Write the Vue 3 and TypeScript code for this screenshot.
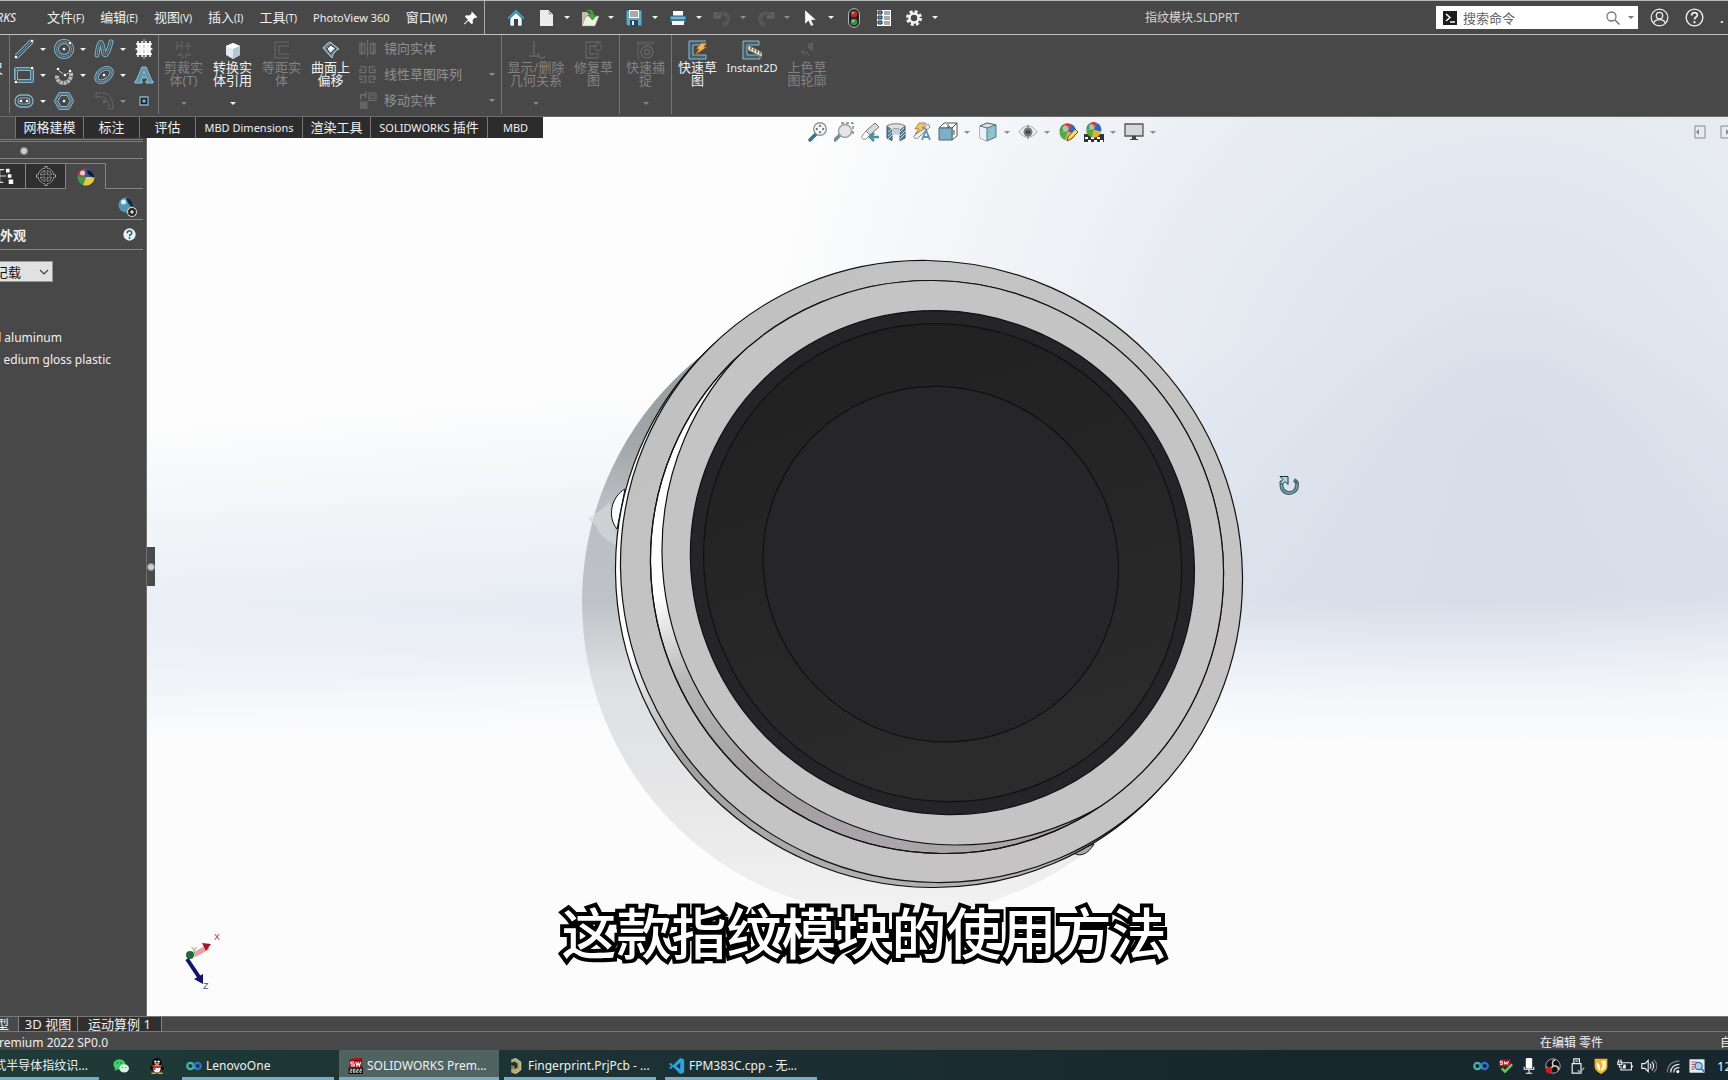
<script setup lang="ts">
interface Tool { icon: string; label: string; drop?: boolean; off?: boolean }
interface Command { icon: string; lines: string[]; width: number; drop?: boolean; off?: boolean }
interface Task { icon: string; label: string; active?: boolean }

const menus = [
  { label: '文件', key: '(F)' },
  { label: '编辑', key: '(E)' },
  { label: '视图', key: '(V)' },
  { label: '插入', key: '(I)' },
  { label: '工具', key: '(T)' },
  { label: 'PhotoView 360', key: '' },
  { label: '窗口', key: '(W)' },
]

const quickTools: Tool[] = [
  { icon: 'home', label: '主页' },
  { icon: 'page', label: '新建', drop: true },
  { icon: 'open', label: '打开', drop: true },
  { icon: 'save', label: '保存', drop: true },
  { icon: 'print', label: '打印', drop: true },
  { icon: 'undo', label: '撤销', drop: true, off: true },
  { icon: 'redo', label: '重做', drop: true, off: true },
  { icon: 'select', label: '选择', drop: true },
  { icon: 'traffic', label: '重建' },
  { icon: 'props', label: '文件属性' },
  { icon: 'gear', label: '选项', drop: true },
]

const sketchTools: Tool[] = [
  { icon: 'line', label: '直线', drop: true },
  { icon: 'circle', label: '圆', drop: true },
  { icon: 'spline', label: '样条曲线', drop: true },
  { icon: 'plane', label: '基准面' },
  { icon: 'rect', label: '矩形', drop: true },
  { icon: 'arc', label: '圆弧', drop: true },
  { icon: 'ellipse', label: '椭圆', drop: true },
  { icon: 'text', label: '文字' },
  { icon: 'slot', label: '槽口', drop: true },
  { icon: 'polygon', label: '多边形' },
  { icon: 'fillet', label: '圆角', drop: true, off: true },
  { icon: 'point', label: '点' },
]

const editCommands: Command[] = [
  { icon: 'trim', lines: ['剪裁实', '体(T)'], width: 49, drop: true, off: true },
  { icon: 'convert', lines: ['转换实', '体引用'], width: 49, drop: true },
  { icon: 'offset', lines: ['等距实', '体'], width: 49, off: true },
  { icon: 'surface', lines: ['曲面上', '偏移'], width: 49 },
]
const listCommands: Tool[] = [
  { icon: 'mirror', label: '镜向实体' },
  { icon: 'pattern', label: '线性草图阵列', drop: true },
  { icon: 'move', label: '移动实体', drop: true },
]
const relationCommands: Command[] = [
  { icon: 'relation', lines: ['显示/删除', '几何关系'], width: 66, drop: true, off: true },
  { icon: 'repair', lines: ['修复草', '图'], width: 49, off: true },
]
const snapCommands: Command[] = [
  { icon: 'snap', lines: ['快速捕', '捉'], width: 49, drop: true, off: true },
]
const rapidCommands: Command[] = [
  { icon: 'rapid', lines: ['快速草', '图'], width: 51 },
  { icon: 'instant', lines: ['Instant2D'], width: 58 },
  { icon: 'shade', lines: ['上色草', '图轮廓'], width: 52, off: true },
]
const commandGroups = [relationCommands, snapCommands, rapidCommands]

const ribbonTabs = [
  { latin: '', label: '网格建模', width: 68 },
  { latin: '', label: '标注', width: 56 },
  { latin: '', label: '评估', width: 56 },
  { latin: 'MBD Dimensions', label: '', width: 107 },
  { latin: '', label: '渲染工具', width: 68 },
  { latin: 'SOLIDWORKS ', label: '插件', width: 117 },
  { latin: 'MBD', label: '', width: 56 },
]

const viewTools: Tool[] = [
  { icon: 'zoomfit', label: '整屏显示' },
  { icon: 'zoomarea', label: '局部放大' },
  { icon: 'prev', label: '上一视图' },
  { icon: 'section', label: '剖面视图' },
  { icon: 'annot', label: '动态注解' },
  { icon: 'orient', label: '视图定向', drop: true },
  { icon: 'display', label: '显示样式', drop: true },
  { icon: 'eye', label: '隐藏/显示', drop: true },
  { icon: 'appearance', label: '编辑外观' },
  { icon: 'scene', label: '应用布景', drop: true },
  { icon: 'monitor', label: '视图设定', drop: true },
]

const tasks: Task[] = [
  { icon: 'lenovo', label: 'LenovoOne' },
  { icon: 'sw', label: 'SOLIDWORKS Prem...', active: true },
  { icon: 'altium', label: 'Fingerprint.PrjPcb - ...' },
  { icon: 'vscode', label: 'FPM383C.cpp - 无...' },
]
const tray = ['lenovo', 'swtray', 'mic', 'obs', 'usb', 'shield', 'battery', 'volume', 'wifi', 'viewer']

const B = '#7fb4cc'
const ball = '<path d="M10 10 1.500 9A8.500 8.500 0 0 1 6 2z" fill="#3f9b4a"/><path d="M10 10 6 2A8.500 8.500 0 0 1 13 2z" fill="#c93d3b"/><path d="M10 10 13 2A8.500 8.500 0 0 1 18 12z" fill="#3565b8"/><path d="M10 10 18 12A8.500 8.500 0 0 1 7 18z" fill="#d9b62c"/><path d="M10 10 7 18A8.500 8.500 0 0 1 1.500 9z" fill="#58a84a"/><circle cx="7.500" cy="6.500" r="3" fill="#fff" opacity=".5"/>'
const swoosh = (d: string, w = 5) =>
  `<g fill="none" stroke-linecap="round" stroke-linejoin="round"><path d="${d}" stroke="${B}" stroke-width="${w}"/><path d="${d}" stroke="#484848" stroke-width="${w - 2}"/><path d="${d}" stroke="#6699b0" stroke-width="1"/></g>`
const node = (x: number, y: number) => `<rect x="${x - 1.5}" y="${y - 1.5}" width="3" height="3" fill="#fff" stroke="#222" stroke-width=".5"/>`

const icons: Record<string, string> = {
  pin: '<path d="M11 2l7 7-2 1-1-.5-3 3 .5 4-2 1-4-4L2 18l-.8-.8 5-5L2.500 8.500l1.200-2L8 7l3-3-.7-1z" fill="#fff"/>',
  home: '<path d="M4 9v9h12V9l-6-6z" fill="#f2f6f7" stroke="#246" stroke-width=".6"/><path d="M10 1 1 10l1.800 1.500L10 4.600l7.200 6.900L19 10z" fill="#4d9ab4" stroke="#1d5266" stroke-width=".8"/><path d="M8 11h4v7H8z" fill="#3b4145"/>',
  page: '<path d="M4 2h8l5 5v11H4z" fill="#ececec"/><path d="M12 2v5h5z" fill="#aaa" stroke="#fff" stroke-width=".6"/>',
  open: '<path d="M2 4h5l2 2h5v12H2z" fill="#bdbdb0"/><path d="M6 8h13l-4 10H2z" fill="#f0f0e6" stroke="#8b8b7b" stroke-width=".5"/><path d="M5 3c5-3 9-1 9 4h3l-4.500 5L8 7h3c0-3-2-4-6-4z" fill="#49a33c" stroke="#1f6a1b" stroke-width=".6"/>',
  save: '<path d="M2 2h16v16H4l-2-2z" fill="#69a7bf" stroke="#245266"/><path d="M5 2h10v8H5z" fill="#fff"/><path d="M6 4h8M6 6h8M6 8h8" stroke="#555" stroke-width="1"/><path d="M6 12h8v6H6z" fill="#2b4654"/><path d="M8 13h2v4H8z" fill="#e4eef2"/>',
  print: '<path d="M5 3h10v5H5z" fill="#fff"/><path d="M2 8h16v6H2z" fill="#6fb3cd" stroke="#24596d"/><path d="M4 13h12v4H4z" fill="#f4f4f4"/><path d="M2 12h16" stroke="#173f50"/>',
  undo: '<path d="M3 4v5h6M4 8c3-4 12-4 12 3 0 3-2 5-5 6" fill="none" stroke="#626262" stroke-width="3"/><path d="M4 8c3-4 12-4 12 3 0 3-2 5-5 6" fill="none" stroke="#484848"/>',
  redo: '<path d="M17 4v5h-6M16 8C13 4 4 4 4 11c0 3 2 5 5 6" fill="none" stroke="#626262" stroke-width="3"/><path d="M16 8C13 4 4 4 4 11c0 3 2 5 5 6" fill="none" stroke="#484848"/>',
  select: '<path d="M5 2v14l3.500-3.200L11 18l2.500-1-2.300-5H16z" fill="#fff" stroke="#666" stroke-width=".5"/>',
  traffic: '<rect x="4.500" y=".7" width="11" height="18.600" rx="5.500" fill="#222" stroke="#bbb"/><circle cx="10" cy="6" r="3.300" fill="#b82c2a"/><circle cx="10" cy="14" r="3.300" fill="#44914a"/><circle cx="9" cy="5" r="1" fill="#eaa"/><circle cx="9" cy="13" r="1" fill="#bdb"/>',
  props: '<path d="M3 2h14v16H3z" fill="#fff"/><path d="M4 3h4v3H4zM4 8h4v3H4zM4 13h4v3H4z" fill="#5296b2" stroke="#234"/><path d="M10 4h6M10 6h6M10 9h6M10 11h6M10 14h6M10 16h6" stroke="#555"/>',
  gear: '<circle cx="10" cy="10" r="6" fill="none" stroke="#f2f2f2" stroke-width="4" stroke-dasharray="2.700 2"/><circle cx="10" cy="10" r="4.500" fill="none" stroke="#f2f2f2" stroke-width="2.500"/>',
  person: '<circle cx="10" cy="10" r="8.800" fill="none" stroke="#eee" stroke-width="1.300"/><circle cx="10" cy="8" r="3.400" fill="none" stroke="#eee" stroke-width="1.300"/><path d="M4 16c1-5 11-5 12 0" fill="none" stroke="#eee" stroke-width="1.300"/>',
  help: '<circle cx="10" cy="10" r="8.800" fill="none" stroke="#eee" stroke-width="1.400"/><path d="M7 8c0-4 6-4 6-.5 0 2-3 2-3 4.500" fill="none" stroke="#eee" stroke-width="1.800"/><circle cx="10" cy="15" r="1.200" fill="#eee"/>',
  line: swoosh('M3 17 17 3') + node(2, 18) + node(18, 2),
  circle: swoosh('M10 2.500a7.500 7.500 0 1 0 .1 0z') + node(10, 10) + node(16, 4),
  spline: swoosh('M3 16C5 0 8 1 9 10s4 8 8-7'),
  plane: '<path d="M4 4h12v12H4z" fill="#eee"/><path d="M10 0v20M1 10h18" stroke="#bbb"/><path d="M4 2v16M8 2v16M12 2v16M16 2v16M2 5h16M2 10h16M2 15h16" stroke="#fff" stroke-width="1.500"/>',
  rect: swoosh('M2 4h16v12H2z', 4) + node(2, 17) + node(18, 3),
  arc: '<path d="M17 8c1 13-15 13-14 2" fill="none" stroke="#b9b9b9" stroke-width="4" stroke-dasharray="3 .7"/><path d="M5 6l6 4 5-3" fill="none" stroke="#ccc"/>' + node(4, 4) + node(16, 6) + node(11, 10),
  ellipse: '<g transform="rotate(-38 10 10)" fill="none"><ellipse cx="10" cy="10" rx="8.500" ry="5.500" stroke="#7fb4cc" stroke-width="4.500"/><ellipse cx="10" cy="10" rx="8.500" ry="5.500" stroke="#484848" stroke-width="2.500"/><ellipse cx="10" cy="10" rx="8.500" ry="5.500" stroke="#6699b0"/></g>' + node(10, 10),
  text: '<path d="M8 2h4l6 14h1v2h-7v-2h2l-1-3H8l-1 3h1v2H1v-2h1zM10 6l-1.500 5h3z" fill="#5f93aa" stroke="#8fc3d9" fill-rule="evenodd"/>',
  slot: '<rect x="1" y="4" width="18" height="12" rx="6" fill="none" stroke="#7fb4cc" stroke-width="1.300"/><rect x="4" y="7" width="12" height="6" rx="3" fill="none" stroke="#7fb4cc" stroke-width="1.200"/>' + node(7, 10) + node(13, 10),
  polygon: swoosh('M6 3h8l4 7-4 7H6l-4-7z', 4) + node(10, 10),
  fillet: '<path d="M2 2h6c7 0 11 5 11 16h-4C15 9 12 6 7 6H2z" fill="none" stroke="#686868"/><path d="M9 9h3v3H9z" fill="#666"/>',
  point: '<path d="M6 6h8v8H6z" fill="#222" stroke="#7fb4cc" stroke-width="1.300"/><path d="M8.500 8.500h3v3h-3z" fill="#9ac"/>',
  trim: '<path d="M3 2v8M8 1v9M14 2v8M3 6h5M11 6h6M6 12l3 6M14 12l-3 6M3 15h5M12 15h5" stroke="#5e5e5e" fill="none" stroke-width="1.600"/>',
  convert: '<path d="M3 6l7-3 7 3v9l-7 4-7-4z" fill="#dfe9ee"/><path d="M3 6l7-3 7 3-7 3z" fill="#fff"/><path d="M10 9l7-3v9l-7 4z" fill="#b5c7d0"/>',
  offset: '<path d="M17 2H3v16h14M17 6H7v8h10" fill="none" stroke="#5e5e5e" stroke-width="1.600"/>',
  surface: '<path d="M2 8c2-3 5-5 7-6l9 7c-3 1-6 4-7 9z" fill="#6d8994" stroke="#b9d4df"/><path d="M6 9c1-2 3-3 4-4l5 4c-3 1-4 2-5 5z" fill="#f5f7f7" stroke="#234"/>',
  mirror: '<path d="M10 1v18M2 5v10h5V5zM13 5v10h5V5zM4 3v14M16 3v14" fill="none" stroke="#6a6a6a" stroke-width="1.500"/>',
  pattern: '<path d="M2 2h6v6H2v-3h3M18 2h-6v6h6v-3h-3M2 18h6v-6H2v3h3M18 18h-6v-6h6v3h-3" fill="none" stroke="#6c6c6c" stroke-width="1.400"/>',
  move: '<path d="M2 11h8v8H2z" fill="#646464"/><path d="M11 2h8v8h-8zM13 4h4v4h-4z" fill="none" stroke="#707070"/><path d="M3 9V4h5M8 1v6" stroke="#707070" fill="none" stroke-width="1.500"/>',
  relation: '<path d="M8 1v14M3 16h10" stroke="#646464" stroke-width="1.600"/><path d="M13 13c-2 5 4 7 6 3" fill="none" stroke="#646464" stroke-width="1.600"/>',
  repair: '<path d="M17 2H2v16h12M13 6H6v8h4" fill="none" stroke="#646464" stroke-width="1.300"/><circle cx="14" cy="7" r="3.500" fill="none" stroke="#646464"/><path d="M9 14h4M14 11v7" stroke="#646464"/>',
  snap: '<circle cx="11" cy="12" r="6" fill="none" stroke="#646464" stroke-width="1.400"/><circle cx="11" cy="12" r="2.500" fill="none" stroke="#646464" stroke-width="1.400"/><path d="M1 2h18M2 4h16M2 2v16h3" stroke="#646464" fill="none"/>',
  rapid: '<path d="M18 1H1v18h17v-4H5V5h9" fill="#49606b" stroke="#86bdd4"/><path d="M13 3h6l-3 4h3L7 15l4-6H8z" fill="#f2b45c" stroke="#8a5215" stroke-width=".8"/>',
  instant: '<path d="M17 1H1v18h17v-4H5V5h12z" fill="#49606b" stroke="#86bdd4"/><path d="M6 5l14 7v5L6 10z" fill="#f0efc4" stroke="#444" stroke-width=".6"/><path d="M9 7v3M12 8.500v3M15 10v3M18 11.500v3" stroke="#222"/>',
  shade: '<path d="M11 4l5-2v9l-5-3zM3 12l4-3v5z" fill="#5e5e5e"/><path d="M6 14l4-2 2 4" fill="none" stroke="#5e5e5e"/>',
  zoomfit: '<path d="M8 12l-6 6" stroke="#3e6f86" stroke-width="3.500" stroke-linecap="round"/><circle cx="12" cy="7" r="6.300" fill="#f5f7f8" stroke="#8d9498" stroke-width="1.400"/><path d="M12 2.500l1.500 2h-3zM12 11.500l1.500-2h-3zM7.500 7l2-1.500v3zM16.500 7l-2-1.500v3z" fill="#444"/>',
  zoomarea: '<path d="M7 1h12v12" fill="none" stroke="#444" stroke-dasharray="3 2"/><path d="M6 13l-5 5" stroke="#6f8d9b" stroke-width="3.500" stroke-linecap="round"/><circle cx="11" cy="9" r="6.500" fill="#e4e6e8" stroke="#9b9ea0" stroke-width="1.400"/>',
  prev: '<path d="M15 1l4 4-9 8-4-4z" fill="#d7d9da" stroke="#777"/><path d="M6 9l4 4-4 4c-3 1-5-1-4-3z" fill="#fff" stroke="#888"/><path d="M19 15h-7M14 11l-4 4 4 4" fill="none" stroke="#4d8ca5" stroke-width="2.500"/>',
  section: '<path d="M1 4v12l5 2.500V10c2-2 6-2 8 0v8.500l5-2.500V4z" fill="#4f8196" stroke="#4c5459"/><path d="M1 4c3-3 15-3 18 0l-5 4c-2-2-6-2-8 0z" fill="#dde2e4" stroke="#777"/><path d="M6 8c2-2 6-2 8 0v6c-2-2-6-2-8 0z" fill="#c3d1d8"/><path d="M2 14l4-4M2 10l4-3M2 17l4-4M14 14l5-5M14 10l4-4M14 17l5-5" stroke="#bad6e2"/>',
  annot: '<path d="M16 2l2 3-11 10c-3 3-6 1-5-1z" fill="#eee" stroke="#888"/><path d="M7 1h7l-4 5h4L3 12l4-5H3z" fill="#f4c766" stroke="#7a6740" stroke-width=".7"/><path d="M10 18l4-10 4 10M11.500 15h5" fill="none" stroke="#5896b0" stroke-width="1.800"/>',
  orient: '<path d="M6 1h13v13l-5 4V6H1z" fill="#fff" stroke="#555"/><path d="M1 6h13v12H1z" fill="#7db0c5" stroke="#4c6874"/><path d="M14 6l5-5M10 2v4M12 4l-2 2M16 8v5" stroke="#444"/>',
  display: '<path d="M2 4l7-3 9 2v12l-9 4-7-3z" fill="#8fc1d5" stroke="#5b7480"/><path d="M2 4l7 2v13l-7-3z" fill="#e8f2f6"/><path d="M2 4l7-3 9 2-9 3z" fill="#cfe3eb" stroke="#5b7480"/><path d="M9 6v13" stroke="#5b7480"/>',
  eye: '<path d="M1 10c5-8 13-8 18 0-5 7-13 7-18 0z" fill="#eee" stroke="#aaa"/><circle cx="10" cy="10" r="4.500" fill="#777"/><circle cx="10" cy="10" r="2" fill="#222"/><path d="M10 3v14" stroke="#777"/>',
  appearance: ball + '<path d="M17 7l3 3-7 7-4 2 1-4z" fill="#f4d878" stroke="#6a5538"/>',
  scene: '<path d="M0 12h20v8H0z" fill="#333"/><path d="M1 15h3v2H1zM7 15h3v2H7zM13 15h3v2h-3zM4 18h3v2H4zM10 18h3v2h-3zM16 18h3v2h-3z" fill="#fff"/><g transform="translate(1 -1) scale(.9)">' + ball + '</g>',
  monitor: '<path d="M1 2h18v12H1z" fill="#d6d7da" stroke="#555" stroke-width="1.300"/><path d="M8 14h4v3h2v1H6v-1h2z" fill="#444"/>',
  tree: '<path d="M3 3h5M3 3v14h4M3 10h7" fill="none" stroke="#ddd" stroke-width="1.300"/><path d="M10 2h4v4h-4zM12 8h4v4h-4zM13 14h5v5h-5z" fill="#fff"/>',
  target: '<circle cx="10" cy="10" r="6.800" fill="none" stroke="#a7a7a7" stroke-width="3"/><path d="M10 0v20M0 10h20" stroke="#a7a7a7" stroke-width="3"/><circle cx="10" cy="10" r="6.800" fill="none" stroke="#222" stroke-width="1.400"/><path d="M10 1v18M1 10h18" stroke="#222" stroke-width="1.400"/>',
  ball: '<path d="M10 10 1.500 9A8.500 8.500 0 0 1 13 2z" fill="#c93d3b"/><path d="M10 10 1.500 9A8.500 8.500 0 0 0 7 18z" fill="#3f9b4a"/><path d="M10 10 18.500 10A8.500 8.500 0 0 1 7 18z" fill="#e2cd3f"/><path d="M10 10 9 1.500A8.500 8.500 0 0 1 18.500 10z" fill="#2b50a5"/><circle cx="6.500" cy="6" r="2.500" fill="#e9eefb" opacity=".8"/><path d="M11 3c5 1 7 4 7 8l-6-4z" fill="#15171d"/>',
  ballgear: '<circle cx="9" cy="8" r="7.500" fill="#5696b4"/><path d="M9 1c5-1 8 5 7 9-4-1-5-4-7-9z" fill="#1b2b36"/><circle cx="6.500" cy="5" r="2.500" fill="#d9edf5"/><circle cx="15" cy="15" r="5" fill="#ddd"/><circle cx="15" cy="15" r="2.700" fill="none" stroke="#222" stroke-width="2"/><circle cx="15" cy="15" r="3.600" fill="none" stroke="#222" stroke-width="1.200" stroke-dasharray="1.600 1.200"/>',
  helpball: '<circle cx="10" cy="10" r="9.500" fill="#e9f2f5"/><path d="M6.500 8c0-5 7-5 7-.5 0 2.500-3.500 2.500-3.500 5" fill="none" stroke="#2d5f76" stroke-width="2.400"/><circle cx="10" cy="15.500" r="1.500" fill="#2d5f76"/>',
  wechat: '<ellipse cx="8" cy="8" rx="7.500" ry="6.500" fill="#3fd16c"/><path d="M3 12l-1 4 4-2z" fill="#3fd16c"/><ellipse cx="14" cy="13" rx="6" ry="5.200" fill="#d9f3e0"/><circle cx="5.500" cy="6" r="1" fill="#1d5b35"/><circle cx="10" cy="6" r="1" fill="#1d5b35"/><circle cx="12" cy="12" r=".8" fill="#487"/><circle cx="16" cy="12" r=".8" fill="#487"/>',
  qq: '<path d="M10 0c-5 0-6 4-6 8-2 3-3 5-2 7l2-1c1 4 11 4 12 0l2 1c1-2 0-4-2-7 0-4-1-8-6-8z" fill="#090909"/><ellipse cx="10" cy="13" rx="4.500" ry="5" fill="#fff"/><path d="M4 8c3 2 9 2 12 0l.5 2.500C13 13 7 13 4 10.500z" fill="#d8262a"/><path d="M5 10h3v5H6z" fill="#d8262a"/><circle cx="8" cy="4.500" r="1.500" fill="#fff"/><circle cx="12" cy="4.500" r="1.500" fill="#fff"/><path d="M6 7c2-1 6-1 8 0-2 2-6 2-8 0z" fill="#e9a52a"/><path d="M3 18h6v2H3zM11 18h6v2h-6z" fill="#e9a52a"/>',
  lenovo: '<g fill="none" stroke-width="2.800"><circle cx="5.500" cy="10" r="4" stroke="#43b5a9"/><circle cx="14.500" cy="10" r="4" stroke="#2d73cf"/><path d="M8 7l4 6" stroke="#3a93bd"/></g>',
  sw: '<path d="M3 3l4-3h11l1 3v8l-3 4H3z" fill="#b5121f"/><path d="M3 3h14l2-3M17 3v9" fill="none" stroke="#5e0a10"/><path d="M9 5H5v2.500h4V10H5M11 5l1.500 5L14 6l1.500 4L17 5" fill="none" stroke="#fff" stroke-width="1.300"/><path d="M2 12h18v8H2z" fill="#111"/><path d="M4 14h2v2H4v2h2M8 14h2v4H8zM12 14h2v2h-2v2h2M16 14h2v2h-2v2h2" fill="none" stroke="#fff"/>',
  altium: '<path d="M4 2l5-2 7 5v10l-7 5-5-2v-4l4-3v3l4-2V7L8 4.500 4 6z" fill="#b5aa78"/><path d="M9 0l7 5v10l-7 5" fill="none" stroke="#e9dfae"/><path d="M4 9l4 1v3l-4 1z" fill="#8c8250"/>',
  vscode: '<path d="M14 0l5 2v16l-5 2L5 11l-3 3-2-1.500L3 10 0 7.500 2 6l3 3zM14 6l-5 4 5 4z" fill="#2ea3e2" fill-rule="evenodd"/>',
  swtray: '<path d="M4 2h13v9H2z" fill="#a81722"/><path d="M7 4H4v2h3v2H4M9 4l1 4 1.500-3L13 8l1-4" fill="none" stroke="#fff" stroke-width="1.200"/><path d="M6 13l4 4 9-9" fill="none" stroke="#5dd05a" stroke-width="3"/>',
  mic: '<rect x="6" y="0" width="8" height="13" rx="1.500" fill="#fff"/><path d="M4 11v3h12v-3M10 14v5M6 19h8" fill="none" stroke="#fff" stroke-width="1.300"/>',
  obs: '<circle cx="10" cy="10" r="9" fill="#111" stroke="#aaa" stroke-width="1.200"/><path d="M10 10C8 4 11 2 13 3M10 10c6-1 8 3 6 5M10 10c-3 5-7 4-8 1" fill="none" stroke="#ccc" stroke-width="2"/><circle cx="5" cy="15" r="4" fill="#c52227"/>',
  usb: '<path d="M6 7V1h7v6M4 7h11v12H4zM8 4h3" fill="none" stroke="#eee" stroke-width="1.500"/><path d="M11 15l3 3 5-6" fill="none" stroke="#9ab" stroke-width="1.800"/>',
  shield: '<path d="M2 1h16v9c0 5-3 7-8 10-5-3-8-5-8-10z" fill="#f1b32c"/><path d="M10 4l6-1v7c0 3-2 5-6 7-2-6 5-5 0-13z" fill="#fff3c8"/><path d="M5 6c5 1 3 7 4 10-3-2-5-5-4-10z" fill="#fff"/>',
  battery: '<path d="M7 6h11v9H5v-5M19 9v3M2 2v3M5 2v3M1 5h5v3H1zM3 8v4" fill="none" stroke="#eee" stroke-width="1.400"/><path d="M8 8h3v5H7z" fill="#eee"/>',
  volume: '<path d="M1 7h4l4-4v14l-4-4H1zM11 7c2 2 2 4 0 6M13.500 4.500c3 3.500 3 7.500 0 11" fill="none" stroke="#eee" stroke-width="1.400"/><path d="M16 2c5 5 5 11 0 16" fill="none" stroke="#778" stroke-width="1.400"/>',
  wifi: '<path d="M3 18C3 9 10 3 18 4" stroke="#758086" stroke-width="1.500" fill="none"/><path d="M7 18c0-6 5-10 11-10M11 18c0-4 3-6 7-6" stroke="#dde" stroke-width="1.600" fill="none"/><circle cx="16" cy="17" r="2" fill="#fff"/>',
  viewer: '<path d="M1 2h18v16H1z" fill="#eceff5" stroke="#c9cdd7"/><path d="M3 5h7M3 8h5M3 11h4M3 14h4" stroke="#b55a62" stroke-width="1.500"/><circle cx="12" cy="10" r="4.500" fill="#a9cdea" stroke="#356c9c" stroke-width="1.500"/><path d="M15 13l4 4" stroke="#356c9c" stroke-width="2"/>',
}
</script>

<template>
  <div class="app">
    <header class="titlebar">
      <div class="brand">SOLIDWORKS</div>
      <nav class="menus">
        <button v-for="m in menus" :key="m.label" class="menu" :class="{ latin: !m.key }">{{ m.label }}<small v-if="m.key">{{ m.key }}</small></button>
        <button class="tool pin" aria-label="固定菜单"><svg viewBox="0 0 20 20" v-html="icons.pin" /></button>
      </nav>
      <div class="quick">
        <template v-for="t in quickTools" :key="t.icon">
          <button class="tool" :aria-label="t.label"><svg viewBox="0 0 20 20" v-html="icons[t.icon]" /></button>
          <button v-if="t.drop" class="drop" :class="{ off: t.off }" :aria-label="t.label + '选项'"></button>
        </template>
      </div>
      <h1 class="doc-title">指纹模块.SLDPRT</h1>
      <label class="search">
        <svg class="prompt" viewBox="0 0 14 14"><path d="M0 0h14v14H0z" fill="#1d1d1d" /><path d="M3 3l4 3.500L3 10M7 11h5" fill="none" stroke="#fff" stroke-width="1.500" /></svg>
        <input type="text" placeholder="搜索命令" aria-label="搜索命令" />
        <svg class="lens" viewBox="0 0 14 14"><circle cx="5.500" cy="5.500" r="4.500" fill="none" stroke="#777" stroke-width="1.300" /><path d="M9 9l4.500 4.500" stroke="#777" stroke-width="1.500" /></svg>
        <span class="caret"></span>
      </label>
      <div class="account">
        <button class="tool" aria-label="登录"><svg viewBox="0 0 20 20" v-html="icons.person" /></button>
        <button class="tool" aria-label="帮助"><svg viewBox="0 0 20 20" v-html="icons.help" /></button>
        <span class="more">.</span>
      </div>
    </header>

    <section class="ribbon">
      <div class="cut-label">尺</div>
      <div class="group sketch">
        <div v-for="t in sketchTools" :key="t.icon" class="sketch-cell">
          <button class="tool" :aria-label="t.label"><svg viewBox="0 0 20 20" v-html="icons[t.icon]" /></button>
          <button v-if="t.drop" class="drop" :class="{ off: t.off }" :aria-label="t.label + '选项'"></button>
        </div>
      </div>
      <div class="group edit">
        <button v-for="c in editCommands" :key="c.icon" class="command" :class="{ off: c.off }" :style="{ width: c.width + 'px' }">
          <svg viewBox="0 0 20 20" v-html="icons[c.icon]" />
          <span v-for="l in c.lines" :key="l">{{ l }}</span>
          <i v-if="c.drop" class="caret"></i>
        </button>
        <div class="rows">
          <button v-for="c in listCommands" :key="c.icon" class="row-command">
            <svg viewBox="0 0 20 20" v-html="icons[c.icon]" /><span>{{ c.label }}</span><i v-if="c.drop" class="caret"></i>
          </button>
        </div>
      </div>
      <div v-for="(g, i) in commandGroups" :key="i" class="group">
        <button v-for="c in g" :key="c.icon" class="command" :class="{ off: c.off }" :style="{ width: c.width + 'px' }">
          <svg viewBox="0 0 20 20" v-html="icons[c.icon]" />
          <span v-for="l in c.lines" :key="l" :class="{ latin: c.lines.length === 1 }">{{ l }}</span>
          <i v-if="c.drop" class="caret"></i>
        </button>
      </div>
    </section>

    <main class="workspace">
      <nav class="ribbon-tabs">
        <button v-for="t in ribbonTabs" :key="t.latin + t.label" :style="{ width: t.width + 'px' }"><span class="latin">{{ t.latin }}</span>{{ t.label }}</button>
      </nav>

      <aside class="panel">
        <div class="grip"><i class="dot"></i></div>
        <div class="panel-tabs">
          <button class="ptab dark first" aria-label="特征树"><svg viewBox="0 0 20 20" v-html="icons.tree" /></button>
          <button class="ptab dark" aria-label="尺寸专家"><svg viewBox="0 0 20 20" v-html="icons.target" /></button>
          <button class="ptab" aria-label="外观"><svg viewBox="0 0 20 20" v-html="icons.ball" /></button>
          <span class="ptab-rest"></span>
        </div>
        <div class="panel-tools"><button class="tool" aria-label="外观设置"><svg viewBox="0 0 20 20" v-html="icons.ballgear" /></button></div>
        <div class="panel-head">
          <h2>外观</h2>
          <button class="mini" aria-label="帮助"><svg viewBox="0 0 20 20" v-html="icons.helpball" /></button>
        </div>
        <div class="sort">
          <select aria-label="排序"><option>记载</option></select>
          <svg viewBox="0 0 10 6"><path d="M1 1l4 4 4-4" fill="none" stroke="#444" stroke-width="1.200" /></svg>
        </div>
        <ul class="materials">
          <li class="short">l aluminum</li>
          <li>edium gloss plastic</li>
        </ul>
      </aside>

      <section class="scene">
        <svg class="model" viewBox="147 117 1581 899" preserveAspectRatio="xMidYMid slice">
          <defs>
            <linearGradient id="shadow" x1="0" y1="0" x2="0" y2="1">
              <stop offset="0" stop-color="#8d9092" /><stop offset=".25" stop-color="#a4a7a9" /><stop offset=".34" stop-color="#b9bec3" />
              <stop offset=".5" stop-color="#bfc3c7" /><stop offset=".62" stop-color="#dddfe1" /><stop offset=".8" stop-color="#e6e6e7" /><stop offset="1" stop-color="#f2f2f2" />
            </linearGradient>
            <linearGradient id="lower" x1="0" y1="0" x2=".4" y2="1" gradientTransform="rotate(-45 .5 .5)">
              <stop offset="0" stop-color="#aaa" /><stop offset=".3" stop-color="#fff" /><stop offset=".55" stop-color="#fff" /><stop offset=".72" stop-color="#a0a0a0" /><stop offset="1" stop-color="#b2b0b1" />
            </linearGradient>
            <linearGradient id="wall" x1="0" y1="0" x2=".35" y2="1" gradientTransform="rotate(-45 .5 .5)">
              <stop offset="0" stop-color="#999" /><stop offset=".2" stop-color="#fff" /><stop offset=".5" stop-color="#fff" /><stop offset=".64" stop-color="#b8b8b8" /><stop offset=".85" stop-color="#a09e9f" /><stop offset="1" stop-color="#aaa5a9" />
            </linearGradient>
            <linearGradient id="face" x1="0" y1="0" x2="1" y2="1" gradientTransform="rotate(-45 .5 .5)">
              <stop offset="0" stop-color="#bfbfbf" /><stop offset=".4" stop-color="#c4c4c4" /><stop offset=".8" stop-color="#c5c3c4" /><stop offset="1" stop-color="#c3c3c3" />
            </linearGradient>
            <linearGradient id="bezel" x1="0" y1="0" x2=".3" y2="1" gradientTransform="rotate(-45 .5 .5)">
              <stop offset="0" stop-color="#202020" /><stop offset=".5" stop-color="#252525" /><stop offset="1" stop-color="#2b2b2c" />
            </linearGradient>
            <clipPath id="hole"><ellipse cx="937" cy="567" rx="290" ry="283" transform="rotate(45 937 567)" /></clipPath>
          </defs>
          <circle cx="896" cy="602" r="314" fill="url(#shadow)" />
          <path d="M588 518c6-2 12-8 22-16l8 44c-10-4-18-10-22-20z" fill="#d5d8dc" opacity=".7" />
          <path d="M625 489c-14 8-18 28-8 40z" fill="#fff" stroke="#111" />
          <path d="M1072 852c8 6 16 2 22-8z" fill="#aaa" stroke="#111" />
          <g stroke="#111" stroke-width="1.200">
            <ellipse cx="927" cy="576" rx="315" ry="308" transform="rotate(45 927 576)" fill="url(#lower)" />
            <ellipse cx="931.500" cy="571.500" rx="315" ry="307" transform="rotate(45 931.500 571.500)" fill="url(#face)" />
            <ellipse cx="937" cy="567" rx="290" ry="283" transform="rotate(45 937 567)" fill="url(#wall)" />
            <g clip-path="url(#hole)"><ellipse cx="951" cy="556" rx="292" ry="286" transform="rotate(45 951 556)" fill="#c4c4c4" /></g>
            <ellipse cx="937" cy="567" rx="290" ry="283" transform="rotate(45 937 567)" fill="none" />
            <ellipse cx="942.400" cy="562.600" rx="256" ry="248" transform="rotate(45 942.400 562.600)" fill="#252528" />
            <ellipse cx="942.600" cy="562.600" rx="242.500" ry="235.500" transform="rotate(45 942.600 562.600)" fill="url(#bezel)" />
            <ellipse cx="940.800" cy="564.200" rx="180.500" ry="175" transform="rotate(45 940.800 564.200)" fill="#262629" />
          </g>
          <g class="triad">
            <path d="M194 955l14-8" stroke="#e8a0a5" stroke-width="5" />
            <path d="M202 943l9 1-5 7z" fill="#a01824" />
            <circle cx="190" cy="955" r="4" fill="#1d6e33" />
            <path d="M187 959l12 18" stroke="#14146f" stroke-width="4" />
            <path d="M194 979l9-5v10z" fill="#14146f" />
            <text x="214" y="940" fill="#b33347">X</text><text x="191" y="953" fill="#6cae78">Y</text><text x="203" y="989" fill="#4a4aa0">Z</text>
          </g>
          <g fill="none">
            <path d="M1282 481c-4 15 16 16 15 3 0-2-1-3-3-4" stroke="#4b6b7a" stroke-width="4" />
            <path d="M1282 481c-4 15 16 16 15 3" stroke="#a5b7c2" stroke-width="1" />
            <path d="M1280 476.500h8v8l-3-3-3 3-2-2 3-3z" fill="#a9d8e2" stroke="#15333c" />
          </g>
        </svg>
        <div class="view-tools">
          <template v-for="t in viewTools" :key="t.icon">
            <button class="tool" :aria-label="t.label"><svg viewBox="0 0 20 20" v-html="icons[t.icon]" /></button>
            <button v-if="t.drop" class="drop off" :aria-label="t.label + '选项'"></button>
          </template>
        </div>
        <div class="window-tools">
          <button aria-label="折叠左侧"><svg viewBox="0 0 12 14"><path d="M1 1h10v12H1z" fill="none" stroke="#888" /><path d="M5 4v6L2 7z" fill="#888" /></svg></button>
          <button aria-label="折叠右侧"><svg viewBox="0 0 12 14"><path d="M1 1h10v12H1z" fill="none" stroke="#888" /><path d="M6 4v6l3-3z" fill="#888" /></svg></button>
        </div>
        <button class="splitter" aria-label="折叠面板"><i class="dot"></i></button>
      </section>
    </main>

    <nav class="model-tabs">
      <button class="cut">模型</button><button class="view3d">3D 视图</button><button class="motion">运动算例 1</button>
    </nav>

    <footer class="status">
      <span class="version">SOLIDWORKS Premium 2022 SP0.0</span>
      <span class="mode">在编辑 零件</span>
      <span class="custom">自</span>
    </footer>

    <div class="taskbar">
      <button class="task cut-task"><span>指纹式半导体指纹识...</span></button>
      <button class="launch" aria-label="微信"><svg viewBox="0 0 20 20" v-html="icons.wechat" /></button>
      <button class="launch" aria-label="QQ"><svg viewBox="0 0 20 20" v-html="icons.qq" /></button>
      <button v-for="t in tasks" :key="t.label" class="task" :class="{ active: t.active }">
        <svg viewBox="0 0 20 20" v-html="icons[t.icon]" /><span>{{ t.label }}</span>
      </button>
      <div class="tray">
        <svg v-for="t in tray" :key="t" viewBox="0 0 20 20" v-html="icons[t]" />
        <span class="clock">12:</span>
      </div>
    </div>

    <p class="subtitle">这款指纹模块的使用方法</p>
  </div>
</template>

<style>
body { margin: 0; overflow: hidden; background: #484848; }
</style>

<style scoped>
.app {
  position: relative;
  display: flex;
  flex-direction: column;
  height: 100vh;
  overflow: hidden;
  font: 13px/16px "Noto Sans", "Noto Sans CJK SC", sans-serif;
  color: #f0f0f0;
  background: #484848;
}
button { padding: 0; margin: 0; border: 0; background: none; color: inherit; font: inherit; white-space: nowrap; }
svg { display: block; }
h1, h2, p, ul { margin: 0; padding: 0; }
.tool { flex: none; width: 20px; height: 20px; }
.tool svg { width: 100%; height: 100%; }
.drop { flex: none; width: 12px; height: 16px; display: grid; place-items: center; color: #f2f2f2; }
.drop::before, .caret { content: ""; width: 0; height: 0; border: 3px solid transparent; border-top-color: currentColor; border-bottom: 0; }
.drop.off { color: #8d8d8d; }
.latin { font-size: 11px; }

.titlebar { flex: none; display: flex; align-items: center; height: 33px; border-top: 1px solid #b4baba; border-bottom: 1px solid #c4c4c4; }
.brand { flex: none; display: flex; justify-content: flex-end; width: 16px; overflow: hidden; font-style: italic; font-size: 12px; }
.menus { flex: none; display: flex; align-items: center; justify-content: space-between; box-sizing: border-box; width: 469px; height: 100%; padding: 0 5px 0 31px; border-right: 1px solid #aaa; }
.menu small { font-size: 10px; }
.pin { width: 16px; height: 16px; }
.quick { flex: none; display: flex; align-items: center; padding-left: 21px; }
.quick .tool { width: 20px; margin-right: 10px; }
.quick .tool:has(+ .drop) { margin-right: 5px; }
.quick .drop { margin-right: 7px; }
.doc-title { flex: 1; text-align: center; font-size: 12px; font-weight: 400; color: #d5d5d5; }
.search { flex: none; display: flex; align-items: center; box-sizing: border-box; width: 202px; height: 23px; padding: 0 4px 0 7px; background: #fff; color: #777; }
.search .prompt { width: 14px; height: 14px; }
.search input { flex: 1; min-width: 0; margin: 0; padding: 0 0 0 6px; border: 0; outline: 0; background: none; font: inherit; color: #555; }
.search input::placeholder { color: #666; opacity: 1; }
.search .lens { width: 14px; height: 14px; margin-right: 8px; }
.account { flex: none; display: flex; align-items: center; gap: 16px; width: 78px; margin-left: 12px; overflow: hidden; }
.account .tool { width: 19px; height: 19px; }
.more { font-weight: 700; }

.ribbon { flex: none; display: flex; box-sizing: border-box; height: 82px; border-bottom: 1px solid #6c6c6c; }
.cut-label { width: 9px; height: 67px; line-height: 67px; overflow: hidden; display: flex; justify-content: flex-end; padding-right: 6px; box-sizing: border-box; }
.group { display: flex; border-left: 1px solid #777; margin-bottom: 2px; }
.sketch { display: grid; grid-template-columns: 40px 40px 40px 28px; grid-template-rows: 26px 26px 26px; padding-top: 1px; }
.sketch-cell { display: flex; align-items: center; gap: 3px; padding-left: 4px; }
.group.edit { width: 342px; }
.command { display: flex; flex-direction: column; align-items: center; position: relative; height: 80px; padding: 5px 0 0; line-height: 13px; }
.command svg { width: 20px; height: 20px; margin-bottom: 1px; }
.command span { height: 13px; }
.command .caret { position: absolute; bottom: 10px; }
.off { color: #838383; }
.rows { flex: 1; display: flex; flex-direction: column; color: #909090; }
.row-command { display: flex; align-items: center; height: 26px; padding: 0 6px 0 3px; }
.row-command svg { width: 19px; height: 19px; margin-right: 7px; }
.row-command .caret { margin-left: auto; }
.group:nth-child(4), .group:nth-child(5) { padding: 0 1px; }

.workspace { flex: 1; min-height: 0; display: grid; grid-template-columns: 147px minmax(0, 1fr); grid-template-rows: 21px minmax(0, 1fr); }
.ribbon-tabs { grid-area: 1 / 1 / 2 / 3; justify-self: start; z-index: 1; display: flex; padding-left: 15px; background: #484848; }
.ribbon-tabs button { box-sizing: border-box; border-left: 1px solid #777; background: #2c2c2c; }
.panel { grid-area: 2 / 1 / 3 / 2; box-sizing: border-box; padding: 1px 3px 0 0; border-right: 1px solid #707070; overflow: hidden; }
.dot { display: block; width: 6px; height: 6px; border-radius: 50%; background: #ccc; border: 1px solid #888; }
.grip { box-sizing: border-box; height: 20px; padding: 5px 0 0 20px; border-top: 3px double #6f8080; border-bottom: 1px solid #858585; }
.panel-tabs { display: flex; height: 26px; margin-top: 4px; }
.ptab { box-sizing: border-box; width: 40px; border: 1px solid #858585; border-width: 1px 1px 0 0; display: grid; place-items: center; }
.ptab.dark { background: #2f2f2f; border-bottom-width: 1px; }
.ptab.first { width: 26px; justify-items: start; }
.ptab svg { width: 20px; height: 20px; }
.ptab.first svg { width: 18px; margin-left: -3px; }
.ptab-rest { flex: 1; border-bottom: 1px solid #858585; }
.panel-tools { display: flex; justify-content: flex-end; align-items: flex-end; height: 28px; padding: 0 6px 2px 0; border-bottom: 1px solid #858585; }
.panel-head { display: flex; justify-content: space-between; align-items: center; height: 29px; padding-right: 7px; border-bottom: 1px solid #858585; }
.panel-head h2 { font-size: 13px; font-weight: 700; line-height: 16px; }
.mini { width: 13px; height: 13px; }
.sort { position: relative; display: flex; justify-content: flex-end; width: 53px; height: 21px; margin: 11px 0 45px; overflow: hidden; }
.sort select { flex: none; width: 80px; appearance: none; box-sizing: border-box; border: 1px solid #999; border-radius: 0; padding: 0 0 0 21px; background: #e1e1e1; color: #111; font: inherit; }
.sort svg { position: absolute; right: 4px; top: 8px; width: 10px; height: 6px; }
.materials { list-style: none; font-size: 12px; line-height: 22px; }
.materials li { display: flex; justify-content: flex-end; width: 111px; white-space: nowrap; }
.materials .short { width: 62px; }

.scene {
  grid-area: 1 / 2 / 3 / 3;
  position: relative;
  overflow: hidden;
  background:
    linear-gradient(180deg, transparent 54%, rgba(253, 253, 254, .5) 62%, #fcfcfd 70%),
    radial-gradient(ellipse 48% 90% at 86% 36%, rgba(207, 215, 229, .8), rgba(216, 223, 234, .55) 50%, transparent 100%),
    linear-gradient(176deg, transparent 30%, rgba(220, 227, 238, .85) 57%, transparent 68%),
    #fdfdfd;
}
.model { width: 100%; height: 100%; }
.triad text { font: 9px "Liberation Sans", sans-serif; }
.view-tools { position: absolute; top: 5px; left: 661px; display: flex; align-items: center; }
.view-tools .tool { margin-right: 6px; }
.view-tools .tool:has(+ .drop) { margin-right: 3px; }
.view-tools .drop { margin-right: 5px; }
.window-tools { position: absolute; top: 8px; right: -4px; display: flex; gap: 14px; }
.window-tools svg { width: 12px; height: 14px; }
.splitter { position: absolute; left: 0; top: 430px; width: 8px; height: 39px; background: #484b4e; }

.model-tabs { flex: none; display: flex; height: 14px; border-top: 1px solid #777; border-bottom: 1px solid #777; line-height: 14px; }
.model-tabs button { box-sizing: border-box; height: 14px; border-right: 1px solid #858585; background: #2f2f2f; overflow: hidden; }
.model-tabs .cut { width: 19px; padding-right: 9px; display: flex; justify-content: flex-end; background: none; }
.view3d { width: 59px; }
.motion { width: 84px; }
.status { flex: none; display: flex; align-items: center; box-sizing: border-box; height: 18px; padding-top: 3px; font-size: 12px; line-height: 15px; }
.version { display: flex; justify-content: flex-end; width: 108px; white-space: nowrap; }
.mode { margin-left: auto; width: 180px; }
.custom { width: 8px; overflow: hidden; }
.taskbar { flex: none; display: flex; height: 30px; background: linear-gradient(90deg, #1f3b37, #1b2f33 45%, #18262d 75%); }
.task { display: flex; align-items: center; gap: 4px; box-sizing: border-box; width: 152px; margin-right: 9px; padding: 4px 0 0 4px; border-bottom: 3px solid #76adc4; }
.task svg { width: 16px; height: 16px; }
.task.active { width: 160px; margin: 0 5px 0 -4px; padding-left: 8px; background: #506361; }
.task span { font-size: 12px; }
.cut-task { width: 99px; padding: 4px 11px 0 0; justify-content: flex-end; margin-right: 14px; }
.cut-task span { flex: none; }
.launch { width: 18px; margin-right: 18px; padding-top: 1px; }
.launch svg { width: 16px; height: 16px; }
.launch + .launch { margin-right: 15px; }
.tray { display: flex; align-items: center; gap: 8px; margin-left: auto; width: 255px; padding-top: 1px; overflow: hidden; flex: none; }
.tray svg { flex: none; width: 16px; height: 16px; }
.clock { flex: none; margin-left: 4px; }

.subtitle {
  position: absolute;
  left: 0;
  right: 0;
  bottom: 118px;
  text-align: center;
  font: 500 55px/64px "Noto Sans CJK SC", sans-serif;
  color: #fff;
  -webkit-text-stroke: 8px #000;
  stroke-linejoin: round;
  paint-order: stroke fill;
  pointer-events: none;
}
</style>
